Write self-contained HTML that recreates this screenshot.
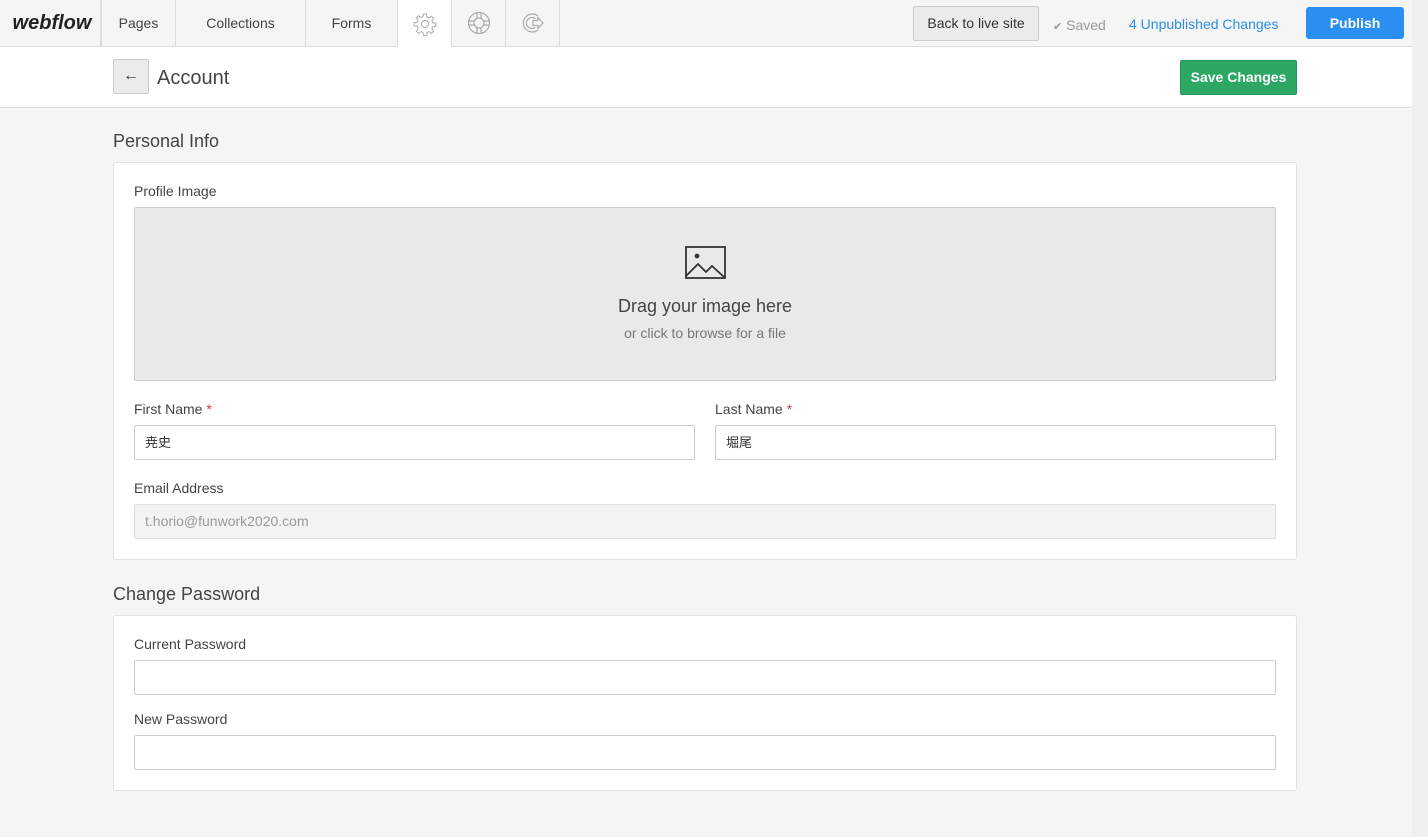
<!DOCTYPE html>
<html><head><meta charset="utf-8"><style>
*{box-sizing:border-box;margin:0;padding:0}
body{width:1428px;height:837px;overflow:hidden;background:#f5f5f5;font-family:"Liberation Sans","Noto Sans CJK JP",sans-serif;color:#333;position:relative}
.top{position:absolute;left:0;top:0;width:1412px;height:47px;background:#f5f5f5;border-bottom:1px solid #ddd}
.tab{position:absolute;top:0;height:46px;border-right:1px solid #ddd;display:flex;align-items:center;justify-content:center;font-size:14px;color:#444}
.sb{position:absolute;right:0;top:0;width:16px;height:837px;background:#f0f0f0}
.hdr{position:absolute;left:0;top:47px;width:1412px;height:61px;background:#fff;border-bottom:1px solid #ddd}
.card{position:absolute;left:113px;width:1184px;background:#fff;border:1px solid #e2e2e2;border-radius:3px}
.lbl{position:absolute;font-size:14px;color:#444}
.inp{position:absolute;height:35px;border:1px solid #ccc;border-radius:2px;background:#fff;font-size:13px;padding-left:10px;line-height:33px}
h2{position:absolute;left:113px;font-size:18px;font-weight:normal;color:#444}
.star{color:#d33}
</style></head><body>
<div class="top">
<div class="tab" style="left:0;width:101px;font-weight:bold;font-style:italic;font-size:20px;color:#222;padding-left:4px">webflow</div>
<div class="tab" style="left:101px;width:75px;border-left:1px solid #ddd">Pages</div>
<div class="tab" style="left:176px;width:130px">Collections</div>
<div class="tab" style="left:306px;width:92px">Forms</div>
<div class="tab" style="left:398px;width:54px;background:#fff;height:47px"><svg width="24" height="24" viewBox="0 0 24 24" fill="none" stroke="#aaa" stroke-width="1"><circle cx="12" cy="12" r="3.5"/><path d="M10.5 2h3l.5 3 2 1 2.5-1.8 2.1 2.1L18.8 8.8l1 2 3 .5v3l-3 .5-1 2 1.8 2.5-2.1 2.1-2.5-1.8-2 1-.5 3h-3l-.5-3-2-1-2.5 1.8-2.1-2.1L5.2 16.2l-1-2-3-.5v-3l3-.5 1-2L3.4 5.8l2.1-2.1L8 5.5l2-1z"/></svg></div>
<div class="tab" style="left:452px;width:54px"><svg width="24" height="24" viewBox="0 0 24 24" fill="none" stroke="#aaa" stroke-width="1.2"><circle cx="12" cy="12" r="10.5"/><circle cx="12" cy="12" r="5"/><path d="M10 1.7v5.5M14 1.7v5.5M10 16.8v5.5M14 16.8v5.5M1.7 10h5.5M1.7 14h5.5M16.8 10h5.5M16.8 14h5.5"/></svg></div>
<div class="tab" style="left:506px;width:54px"><svg width="24" height="24" viewBox="0 0 24 24" fill="none" stroke="#aaa" stroke-width="1.2"><path d="M17 5A9 9 0 1 0 17 19"/><path d="M14 7.5A5.5 5.5 0 1 0 14 16.5"/><path d="M12 9.5h5v-3l5 5.5-5 5.5v-3h-5z"/></svg></div>
<div style="position:absolute;left:913px;top:6px;width:126px;height:35px;border:1px solid #ccc;border-radius:2px;background:#ebebeb;font-size:14px;color:#333;text-align:center;line-height:33px">Back to live site</div>
<div style="position:absolute;left:1053px;top:17px;font-size:14px;color:#999"><span style="font-size:11px">✔</span> Saved</div>
<div style="position:absolute;left:1129px;top:16px;font-size:14px;color:#2d8fe8">4 Unpublished Changes</div>
<div style="position:absolute;left:1306px;top:7px;width:98px;height:32px;background:#2a8ff0;border-radius:3px;color:#fff;font-size:14px;font-weight:bold;text-align:center;line-height:32px">Publish</div>
</div>
<div class="sb"></div>
<div class="hdr">
<div style="position:absolute;left:113px;top:12px;width:36px;height:35px;border:1px solid #ccc;border-radius:2px;background:#ebebeb;font-size:16px;text-align:center;line-height:32px">←</div>
<div style="position:absolute;left:157px;top:20px;font-size:20px;color:#444">Account</div>
<div style="position:absolute;left:1180px;top:13px;width:117px;height:35px;background:#2ca864;border:1px solid #24955a;border-radius:2px;color:#fff;font-size:14px;font-weight:bold;text-align:center;line-height:33px">Save Changes</div>
</div>
<h2 style="top:131px">Personal Info</h2>
<div class="card" style="top:162px;height:398px"></div>
<div class="lbl" style="left:134px;top:183px">Profile Image</div>
<div style="position:absolute;left:134px;top:207px;width:1142px;height:174px;background:#e9e9e9;border:1px solid #ccc;border-radius:2px;text-align:center">
<svg style="position:absolute;left:550px;top:38px" width="41" height="34" viewBox="0 0 41 34" fill="none" stroke="#333" stroke-width="1.8"><rect x="1" y="1" width="39" height="31"/><path d="M1 30 13 18l8 8 6-6 12 11"/><circle cx="12" cy="10" r="1.5" fill="#333"/></svg>
<div style="position:absolute;left:0;right:0;top:88px;font-size:18px;color:#444">Drag your image here</div>
<div style="position:absolute;left:0;right:0;top:117px;font-size:14px;color:#777">or click to browse for a file</div>
</div>
<div class="lbl" style="left:134px;top:401px">First Name <span class="star">*</span></div>
<div class="lbl" style="left:715px;top:401px">Last Name <span class="star">*</span></div>
<div class="inp" style="left:134px;top:425px;width:561px">尭史</div>
<div class="inp" style="left:715px;top:425px;width:561px">堀尾</div>
<div class="lbl" style="left:134px;top:480px">Email Address</div>
<div class="inp" style="left:134px;top:504px;width:1142px;background:#f3f3f3;border-color:#e0e0e0;color:#999;font-size:14px">t.horio@funwork2020.com</div>
<h2 style="top:584px">Change Password</h2>
<div class="card" style="top:615px;height:176px"></div>
<div class="lbl" style="left:134px;top:636px">Current Password</div>
<div class="inp" style="left:134px;top:660px;width:1142px"></div>
<div class="lbl" style="left:134px;top:711px">New Password</div>
<div class="inp" style="left:134px;top:735px;width:1142px"></div>
</body></html>
